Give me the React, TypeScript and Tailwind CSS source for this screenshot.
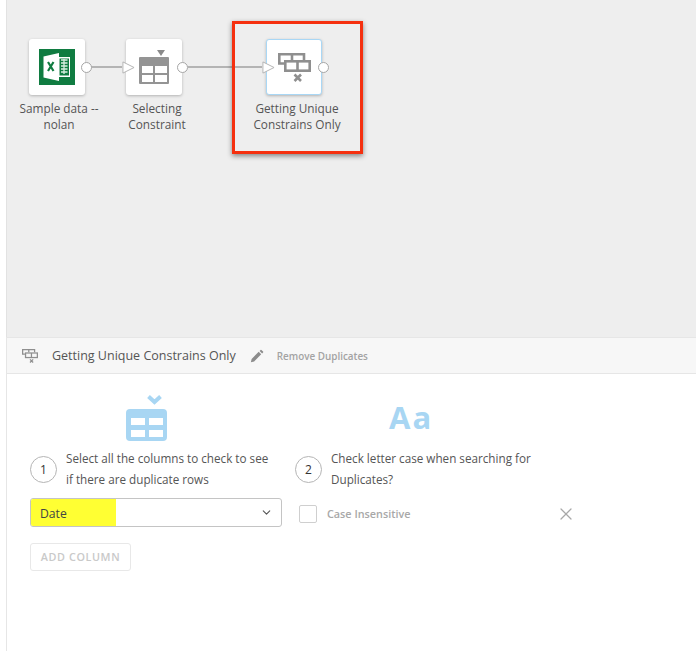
import React from "react";
import { ChevronDown, X } from "lucide-react";

const font = { fontFamily: '"Open Sans", sans-serif' };

const DedupeIcon = ({ className }: { className?: string }) => (
  <svg viewBox="0 0 33 29" className={className} fill="none" stroke="#8f8f8f" strokeWidth="2.6">
    <path d="M6 10.500H1.300V1.300H26V7" />
    <path d="M14 1.300V7" />
    <rect x="7.300" y="8.300" width="24.400" height="9.400" />
    <path d="M19.500 8.300v9.400" />
    <path d="M16.500 21.500l6.500 6.500M23 21.500l-6.500 6.500" />
  </svg>
);

const TableIcon = ({ color, className }: { color: string; className?: string }) => (
  <svg viewBox="0 0 41 46" className={className}>
    <path d="M22.500 1.500l6 5.500 6-5.500" fill="none" stroke={color} strokeWidth="4" />
    <rect x="0" y="14" width="41" height="32" rx="4" fill={color} />
    <rect x="5" y="23" width="14" height="7" fill="#fff" />
    <rect x="23" y="23" width="14" height="7" fill="#fff" />
    <rect x="5" y="35" width="14" height="7" fill="#fff" />
    <rect x="23" y="35" width="14" height="7" fill="#fff" />
  </svg>
);

const FilterTableIcon = () => (
  <svg viewBox="0 0 30 34" className="w-[30px] h-[34px]">
    <path d="M18 0h8l-4 6z" fill="#8a8a8a" />
    <rect x="0" y="7" width="30" height="27" rx="1" fill="#949494" />
    <rect x="3" y="16" width="11" height="7" fill="#fff" />
    <rect x="16" y="16" width="12" height="7" fill="#fff" />
    <rect x="3" y="25" width="11" height="7" fill="#fff" />
    <rect x="16" y="25" width="12" height="7" fill="#fff" />
  </svg>
);

const ExcelIcon = () => (
  <svg viewBox="0 0 36 36" className="w-9 h-9">
    <rect width="36" height="36" fill="#107c41" />
    <path d="M4.500 7.500L20 4v28L4.500 28.500z" fill="#fff" />
    <path d="M20 8h11v20H20z" fill="#fff" />
    <path d="M20.500 9.500h9.500v17h-9.500z" fill="#107c41" />
    <path d="M22 11h6.500M22 14h6.500M22 17h6.500M22 20h6.500M22 23h6.500M25 10v15" stroke="#d7eee0" strokeWidth="1.300" />
    <path d="M9 13l5.500 9M14.500 13L9 22" stroke="#107c41" strokeWidth="2.200" />
  </svg>
);

const Port = ({ className }: { className: string }) => (
  <div className={`absolute top-[62px] w-[11px] h-[11px] rounded-full border border-[#a6a6a6] bg-white ${className}`} />
);

const Arrow = ({ className }: { className: string }) => (
  <svg viewBox="0 0 14 14" className={`absolute top-[61px] w-[13px] h-[13px] ${className}`}>
    <path d="M1 1l12 6-12 6z" fill="#fff" stroke="#b0b0b0" strokeWidth="1" />
  </svg>
);

const Wire = ({ className }: { className: string }) => (
  <div className={`absolute top-[66px] h-[2px] bg-[#b4b4b4] ${className}`} />
);

const Node = ({
  className,
  labelClass,
  selected,
  label,
  children,
}: {
  className: string;
  labelClass: string;
  selected?: boolean;
  label: string[];
  children: React.ReactNode;
}) => (
  <>
    <div
      className={`absolute top-[39px] w-[56px] h-[56px] rounded-[3px] bg-white shadow-[0_1px_3px_rgba(0,0,0,0.25)] flex items-center justify-center ${
        selected ? "border border-[#a9d7f5]" : ""
      } ${className}`}
    >
      {children}
    </div>
    <div className={`absolute top-[100px] w-[110px] text-center text-[11.800px] leading-[16px] text-[#555] ${labelClass}`}>
      {label.map((l) => (
        <div key={l}>{l}</div>
      ))}
    </div>
  </>
);

const Step = ({ n, lines }: { n: number; lines: string[] }) => (
  <div className="flex items-start gap-[9px]">
    <div className="mt-[8px] w-[27px] h-[27px] shrink-0 rounded-full border border-[#b5b5b5] flex items-center justify-center text-[12px] text-[#333]">
      {n}
    </div>
    <div className="text-[11.700px] leading-[21px] text-[#555]">
      {lines.map((l) => (
        <div key={l} className="whitespace-nowrap">
          {l}
        </div>
      ))}
    </div>
  </div>
);

export default function App() {
  return (
    <div className="w-[696px] h-[651px] overflow-hidden bg-white pl-[6px] flex flex-col" style={font}>
      {/* canvas */}
      <div className="relative h-[337px] shrink-0 bg-[#eeeeee] border-l border-[#e2e2e2]">
        <div className="absolute inset-0 -left-[7px]">
          <Wire className="left-[91px] w-[31px]" />
          <Wire className="left-[188px] w-[74px]" />
          <Node className="left-[29px]" labelClass="left-[4px]" label={["Sample data --", "nolan"]}>
            <ExcelIcon />
          </Node>
          <Node className="left-[126px]" labelClass="left-[102px]" label={["Selecting", "Constraint"]}>
            <FilterTableIcon />
          </Node>
          <Node selected className="left-[266px]" labelClass="left-[242px]" label={["Getting Unique", "Constrains Only"]}>
            <DedupeIcon className="w-[33px] h-[29px]" />
          </Node>
          <Port className="left-[81px]" />
          <Arrow className="left-[122px]" />
          <Port className="left-[177px]" />
          <Arrow className="left-[262px]" />
          <Port className="left-[318px]" />
          <div className="absolute left-[232px] top-[21px] w-[131px] h-[133px] border-[3px] border-[#f5300f] shadow-[0_2px_5px_rgba(0,0,0,0.45)]" />
        </div>
      </div>

      {/* header */}
      <div className="h-[37px] shrink-0 bg-[#f7f7f7] border border-r-0 border-[#e6e6e6] flex items-center pl-[15px]">
        <DedupeIcon className="w-[16px] h-[16px]" />
        <span className="ml-[14px] mt-[2px] text-[12.500px] text-[#555]">Getting Unique Constrains Only</span>
        <svg viewBox="0 0 24 24" className="ml-[13px] mt-[1px] w-[15px] h-[15px]" fill="#8c8c8c">
          <path d="M3 21l1.200-5.200L15.500 4.500l4 4L8.200 19.800zM17 3l1.500-1.500a1 1 0 011.400 0l2.600 2.600a1 1 0 010 1.400L21 7z" />
        </svg>
        <span className="ml-[13px] mt-[2px] text-[9.900px] font-semibold text-[#a3a3a3]">Remove Duplicates</span>
      </div>

      {/* settings */}
      <div className="flex-1 border-l border-[#e6e6e6] pl-[23px] flex">
        <div className="w-[252px] flex flex-col">
          <div className="h-[74px] pt-[21px] pl-[96px]">
            <TableIcon color="#a8d6f3" className="w-[41px] h-[46px]" />
          </div>
          <Step n={1} lines={["Select all the columns to check to see", "if there are duplicate rows"]} />
          <div className="mt-[8px] h-[29px] rounded-[3px] border border-[#c4c4c4] flex items-center justify-between pr-[8px] overflow-hidden">
            <div className="w-[85px] h-full bg-[#ffff33] flex items-center pl-[9px] pt-[3px] text-[12.200px] text-[#444]">Date</div>
            <ChevronDown className="w-[13px] h-[13px] text-[#555]" strokeWidth={2} />
          </div>
          <button className="mt-[16px] pt-[1px] w-[101px] h-[28px] rounded-[3px] border border-[#e8e8e8] text-[10.800px] font-semibold tracking-[0.6px] text-[#c9c9c9]">
            ADD COLUMN
          </button>
        </div>
        <div className="ml-[13px] w-[281px] flex flex-col">
          <div className="h-[74px] pt-[24px] pl-[94px] text-[31px] leading-[38px] font-bold tracking-[2px] text-[#a8d6f3]">Aa</div>
          <Step n={2} lines={["Check letter case when searching for", "Duplicates?"]} />
          <div className="mt-[14px] flex items-center pl-[4px]">
            <div className="w-[18px] h-[18px] rounded-[2px] border border-[#cfcfcf]" />
            <span className="ml-[10px] text-[10.800px] font-semibold text-[#a8a8a8]">Case Insensitive</span>
            <X className="ml-auto w-[20px] h-[20px] text-[#a8a8a8]" strokeWidth={1.5} />
          </div>
        </div>
      </div>
    </div>
  );
}
